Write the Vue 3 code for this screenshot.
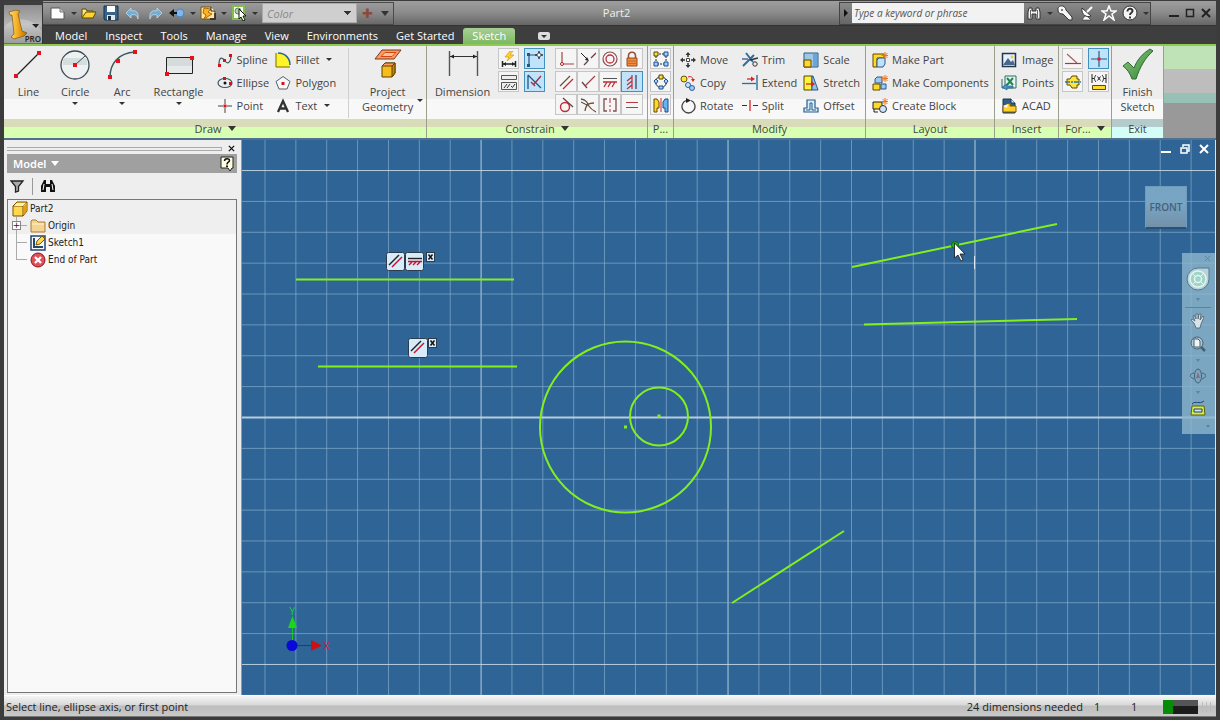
<script setup>
const quick = [
  { icon: 'new', label: 'New', caret: true },
  { icon: 'open', label: 'Open' },
  { icon: 'save', label: 'Save' },
  { icon: 'undo', label: 'Undo' },
  { icon: 'redo', label: 'Redo' },
  { icon: 'return', label: 'Return', caret: true },
  { icon: 'update', label: 'Update', caret: true },
  { icon: 'select', label: 'Select', caret: true }
]
const help = [
  { icon: 'binoc', label: 'Search', caret: true },
  { icon: 'key', label: 'Subscription' },
  { icon: 'dish', label: 'Communication center' },
  { icon: 'star', label: 'Favorites' },
  { icon: 'help', label: 'Help', caret: true }
]
const tabs = ['Model', 'Inspect', 'Tools', 'Manage', 'View', 'Environments', 'Get Started', 'Sketch']
const shapes = [
  { icon: 'line', label: 'Line' },
  { icon: 'circle', label: 'Circle', caret: true },
  { icon: 'arc', label: 'Arc', caret: true },
  { icon: 'rect', label: 'Rectangle', caret: true }
]
const curves = [
  { icon: 'spline', label: 'Spline' },
  { icon: 'ellipse', label: 'Ellipse' },
  { icon: 'point', label: 'Point' }
]
const details = [
  { icon: 'fillet', label: 'Fillet', caret: true },
  { icon: 'polygon', label: 'Polygon' },
  { icon: 'text', label: 'Text', caret: true }
]
const dims = [
  { icon: 'autodim', label: 'Automatic dimensions' },
  { icon: 'infer', label: 'Constraint inference', on: true },
  { icon: 'showcon', label: 'Show constraints' },
  { icon: 'persist', label: 'Constraint persistence', on: true }
]
const cons = [
  { icon: 'coincident', label: 'Coincident' },
  { icon: 'collinear', label: 'Collinear' },
  { icon: 'concentric', label: 'Concentric' },
  { icon: 'lock', label: 'Fix' },
  { icon: 'parallel', label: 'Parallel' },
  { icon: 'perp', label: 'Perpendicular' },
  { icon: 'horiz', label: 'Horizontal' },
  { icon: 'vert', label: 'Vertical', on: true },
  { icon: 'tangent', label: 'Tangent' },
  { icon: 'smooth', label: 'Smooth' },
  { icon: 'symm', label: 'Symmetric' },
  { icon: 'equal', label: 'Equal' }
]
const patterns = [
  { icon: 'rectpat', label: 'Rectangular pattern' },
  { icon: 'circpat', label: 'Circular pattern' },
  { icon: 'mirror', label: 'Mirror' }
]
const modify = [
  [{ icon: 'move', label: 'Move' }, { icon: 'copy', label: 'Copy' }, { icon: 'rotate', label: 'Rotate' }],
  [{ icon: 'trim', label: 'Trim' }, { icon: 'extend', label: 'Extend' }, { icon: 'split', label: 'Split' }],
  [{ icon: 'scale', label: 'Scale' }, { icon: 'stretch', label: 'Stretch' }, { icon: 'offset', label: 'Offset' }]
]
const layout = [
  { icon: 'mkpart', label: 'Make Part' },
  { icon: 'mkcomp', label: 'Make Components' },
  { icon: 'mkblock', label: 'Create Block' }
]
const insert = [
  { icon: 'image', label: 'Image' },
  { icon: 'points', label: 'Points' },
  { icon: 'acad', label: 'ACAD' }
]
const format = [
  { icon: 'constr', label: 'Construction' },
  { icon: 'center', label: 'Center point', on: true },
  { icon: 'cline', label: 'Centerline' },
  { icon: 'driven', label: 'Driven dimension' }
]
const STEP = 30.87
const range = (n) => Array.from({ length: n }, (_, i) => i)
const vLines = range(80).map((i) => ({ at: 733 + (i - 23) * STEP, major: (i - 23) % 8 === 0 }))
const hLines = range(60).map((i) => ({ at: 277.5 + (i - 8) * STEP, major: (i - 8) % 8 === 0, axis: i === 8 }))
</script>

<template>
  <svg class="defs" aria-hidden="true">
    <defs>
      <linearGradient id="gold" x1="0" x2="1"><stop offset="0" stop-color="#ffe27a" /><stop offset=".5" stop-color="#f2a91c" /><stop offset="1" stop-color="#b86c00" /></linearGradient>
      <linearGradient id="green" x1="0" y1="0" x2="1" y2="1"><stop offset="0" stop-color="#8fce7c" /><stop offset="1" stop-color="#2f7f37" /></linearGradient>
    </defs>
    <symbol id="new" viewBox="0 0 16 16"><path d="M1 3h9l4 4v7H1z" fill="#fff" stroke="#555" /><path d="M10 3v4h4" fill="#ccc" stroke="#777" /></symbol>
    <symbol id="open" viewBox="0 0 16 16"><path d="M1 13V4h4l1 2h6v2" fill="#ffe680" stroke="#5b4a00" /><path d="M1 13l4-6h10l-3 6z" fill="#ffd62e" stroke="#5b4a00" /></symbol>
    <symbol id="save" viewBox="0 0 16 16"><path d="M1 1h14v14H2l-1-1z" fill="#3a6487" stroke="#17304a" /><path d="M4 1h8v6H4z" fill="#fff" /><path d="M4 10h8v5H4z" fill="#dfe8ef" /><path d="M5 11h3v4H5z" fill="#1c2c3c" /></symbol>
    <symbol id="undo" viewBox="0 0 16 16"><path d="M6 3v3c5-1 8 1 7 8-1-4-3-5-7-4v3L1 8z" fill="#6faed8" stroke="#e0edf5" stroke-width=".6" /></symbol>
    <symbol id="redo" viewBox="0 0 16 16"><path d="M10 3v3C5 5 2 7 3 14c1-4 3-5 7-4v3l5-5z" fill="#6faed8" stroke="#e0edf5" stroke-width=".6" /></symbol>
    <symbol id="return" viewBox="0 0 16 16"><circle cx="11" cy="8" r="4" fill="#7db6f0" stroke="#4a83c4" /><path d="M5 4v8L0 8zM5 7h3v2H5z" fill="#111" /></symbol>
    <symbol id="update" viewBox="0 0 16 16"><path d="M1 2h10l4 4v8H1z" fill="#ffe6a8" stroke="#7a5200" /><path d="M4 3l7 1-3 3 4 2-8 5 2-4-3-2z" fill="#ffb01e" stroke="#965200" stroke-width=".8" /><path d="M11 2v4h4" fill="#fff" stroke="#222" /><path d="M15 8v6h-5" fill="none" stroke="#222" stroke-width="1.500" /></symbol>
    <symbol id="select" viewBox="0 0 16 16"><path d="M2 1h11v13H2z" fill="#f8fff0" stroke="#82bd50" stroke-width="2" /><circle cx="7" cy="6" r="3" fill="#b8cfaa" stroke="#668158" /><path d="M8 4v10l2-2 2 4 2-1-2-4h3z" fill="#fff" stroke="#111" /></symbol>
    <symbol id="binoc" viewBox="0 0 16 16"><path d="M2 14V7l1-4h3v3h4V3h3l1 4v7h-4V9H6v5z" fill="#f4f4f4" stroke="#333" /><path d="M4.500 5v8M11.500 5v8" stroke="#666" /></symbol>
    <symbol id="key" viewBox="0 0 16 16"><path d="M1 5c-1-5 7-6 8 0l6 7v3h-3L6 9C3 9 1 8 1 5z" fill="#f6f6f6" stroke="#333" /><circle cx="5" cy="5" r="1" fill="#555" /></symbol>
    <symbol id="dish" viewBox="0 0 16 16"><path d="M3 3l9 8c-4 2-10-1-9-8z" fill="#fff" stroke="#333" /><path d="M8 7l5-5" stroke="#fff" stroke-width="2" /><path d="M6 11l-3 4h9l-3-3z" fill="#fff" stroke="#333" stroke-width=".6" /></symbol>
    <symbol id="star" viewBox="0 0 16 16"><path d="M8 1l2 5h5l-4 3 2 6-5-4-5 4 2-6-4-3h5z" fill="#777" stroke="#fff" stroke-width="1.500" /></symbol>
    <symbol id="help" viewBox="0 0 16 16"><circle cx="8" cy="8" r="7" fill="#f5f5f5" stroke="#333" /><path d="M5.500 6.500c0-4 5-3 5-.5 0 2-2.500 1.500-2.500 4" fill="none" stroke="#333" stroke-width="2" /><path d="M7 11.500h2v2H7z" fill="#333" /></symbol>
    <symbol id="line" viewBox="0 0 32 32"><path d="M4 28L27 5" stroke="#222" stroke-width="1.300" /><path d="M2 26h4v4H2zM25 3h4v4h-4z" fill="#e8101c" /></symbol>
    <symbol id="circle" viewBox="0 0 32 32"><circle cx="16" cy="17" r="14" fill="#eef1f1" stroke="#3c4c55" stroke-width="1.300" /><path d="M4 10h24v7H4z" fill="#d5dedd" /><path d="M16 17L26 8" stroke="#345" /><path d="M14 15h4v4h-4z" fill="#e8101c" /></symbol>
    <symbol id="arc" viewBox="0 0 32 32"><path d="M4 29C4 16 12 5 29 4" fill="none" stroke="#3b5961" stroke-width="1.500" /><path d="M2 27h4v4H2zM10 11h4v4h-4zM27 2h4v4h-4z" fill="#e8101c" /></symbol>
    <symbol id="rect" viewBox="0 0 32 32"><path d="M3.500 9.500h26v16h-26z" fill="#e6eaea" stroke="#222" /><path d="M4 10h25v8H4z" fill="#d5dbda" /><path d="M2 24h4v4H2zM27 8h4v4h-4z" fill="#e8101c" /></symbol>
    <symbol id="spline" viewBox="0 0 16 16"><path d="M2 13C2 3 6 6 8 9c3 4 6 1 6-6" fill="none" stroke="#3b5961" stroke-width="1.200" /><path d="M1 12h3v3H1zM6 7h3v3H6zM12 2h3v3h-3z" fill="#d8101c" /></symbol>
    <symbol id="ellipse" viewBox="0 0 16 16"><ellipse cx="8" cy="8" rx="7" ry="4.500" fill="none" stroke="#3b5961" stroke-width="1.200" /><path d="M6 2h3v3H6zM12 7h3v3h-3z" fill="#d8101c" /><circle cx="8" cy="8" r="1.500" fill="#111" /></symbol>
    <symbol id="point" viewBox="0 0 16 16"><path d="M8 1v5M8 10v5M1 8h5M10 8h5" stroke="#444" /><path d="M6.500 6.500h3v3h-3z" fill="#d8101c" /></symbol>
    <symbol id="fillet" viewBox="0 0 16 16"><path d="M1 1h3c7 0 11 4 11 11v3H1z" fill="#fff42b" /><path d="M3 1c7 0 12 5 12 12" fill="none" stroke="#24679a" stroke-width="1.500" /><path d="M1 1v14h14" fill="none" stroke="#786c00" /></symbol>
    <symbol id="polygon" viewBox="0 0 16 16"><path d="M8 1.500l7 5L12 14H4L1 6.500z" fill="#f7f7f7" stroke="#50616a" /><path d="M6.500 7h3v3h-3z" fill="#d8101c" /></symbol>
    <symbol id="text" viewBox="0 0 16 16"><path d="M3 14L8 3l5 11M5 10.500h6" fill="none" stroke="#333" stroke-width="2.300" /></symbol>
    <symbol id="project" viewBox="0 0 32 32"><path d="M10 2h19l-7 9H3z" fill="#ff9a68" stroke="#793b16" /><path d="M13 4.500h11l-4 4H9z" fill="#ffc29a" stroke="#d7470c" /><path d="M10 18l3-3h10v10l-3 4H10z" fill="#f6bc19" stroke="#5a4200" /><path d="M10 18l3-3h10l-3 3z" fill="#ff9a68" stroke="#5a4200" /><path d="M20 18l3-3v10l-3 4z" fill="#c98300" stroke="#5a4200" /></symbol>
    <symbol id="dim" viewBox="0 0 32 32"><path d="M2.500 3v25M30.500 3v25" stroke="#555" stroke-width="1.400" /><path d="M3 8.500h27" stroke="#333" /><path d="M3 8.500l4-2v4zM30 8.500l-4-2v4z" fill="#222" /></symbol>
    <symbol id="autodim" viewBox="0 0 16 16"><path d="M9 0L4 6h4l-2 4 7-6H9l3-4z" fill="#ffd42a" stroke="#d58e00" stroke-width=".6" /><path d="M1.500 10v6M14.500 10v6M2 13h12" stroke="#222" stroke-width="1.500" /><path d="M2 13l3-2v4zM14 13l-3-2v4z" fill="#222" /></symbol>
    <symbol id="infer" viewBox="0 0 16 16"><path d="M2 14V4h8" fill="none" stroke="#235681" stroke-width="1.200" /><path d="M0 2h3v3H0zM0 13h3v3H0z" fill="#235681" /><path d="M12 0l1 3 3 1-3 1-1 3-1-3-3-1 3-1z" fill="#fff" stroke="#222" stroke-width=".8" /></symbol>
    <symbol id="showcon" viewBox="0 0 16 16"><path d="M.5 1.500h15v4H.5zM.5 8.500h15v7H.5z" fill="#eee" stroke="#555" /><path d="M3 14l3-4M6 14l3-4M10 12l1.500 1.500L14 10" stroke="#333" fill="none" /></symbol>
    <symbol id="persist" viewBox="0 0 16 16"><path d="M1 1v14M1 1l13 13" stroke="#235681" stroke-width="1.300" /><path d="M7 10L14 2M4 8l4 4" stroke="#9b3442" stroke-width="1.400" /></symbol>
    <symbol id="coincident" viewBox="0 0 16 16"><path d="M4 1v12h12" fill="none" stroke="#a5434a" stroke-width="1.200" /><circle cx="4" cy="13" r="1.500" fill="#fff" stroke="#a22" /></symbol>
    <symbol id="collinear" viewBox="0 0 16 16"><path d="M1 2l6 6" stroke="#222" /><path d="M5 9l4 1-2-4z" fill="#222" /><path d="M4 14l4-4M11 7l5-5" stroke="#6c3d43" stroke-width="1.300" /></symbol>
    <symbol id="concentric" viewBox="0 0 16 16"><circle cx="8" cy="8" r="7" fill="none" stroke="#8a4d54" stroke-width="1.200" /><circle cx="8" cy="8" r="4" fill="none" stroke="#c22e38" stroke-width="1.300" /></symbol>
    <symbol id="lock" viewBox="0 0 16 16"><path d="M4.500 8V5c0-5 7-5 7 0v3" fill="none" stroke="#9a5230" stroke-width="1.600" /><path d="M3 7h10v8H3z" fill="#f08b3c" stroke="#9a4a20" /><path d="M4 10h8M4 12.500h8" stroke="#c4682c" /></symbol>
    <symbol id="parallel" viewBox="0 0 16 16"><path d="M2 12L12 2" stroke="#69563d" stroke-width="1.300" /><path d="M5 15L15 5" stroke="#c12b36" stroke-width="1.300" /></symbol>
    <symbol id="perp" viewBox="0 0 16 16"><path d="M2 8l5 6" stroke="#6c3d43" stroke-width="1.300" /><path d="M5 12L15 2" stroke="#a5434a" stroke-width="1.300" /></symbol>
    <symbol id="horiz" viewBox="0 0 16 16"><path d="M1 4.500h14" stroke="#555" /><path d="M1 8h14M5 8l-3 5M9 8l-3 5M13 8l-3 5" stroke="#c12b36" stroke-width="1.300" /></symbol>
    <symbol id="vert" viewBox="0 0 16 16"><path d="M12 1v14" stroke="#445" stroke-width="1.300" /><path d="M8 1v14M8 3L3 7M8 7l-5 4M8 11l-5 4" stroke="#c12b36" stroke-width="1.200" /></symbol>
    <symbol id="tangent" viewBox="0 0 16 16"><circle cx="7" cy="10" r="4.500" fill="none" stroke="#c12b36" stroke-width="1.400" /><path d="M5 1l10 9" stroke="#603b40" stroke-width="1.200" /></symbol>
    <symbol id="smooth" viewBox="0 0 16 16"><path d="M1 2c5 1 7 4 7 6 2 3 4 5 8 7M5 14c1-7 4-8 9-8" fill="none" stroke="#6b4e3a" stroke-width="1.300" /><path d="M1 5l6 3" stroke="#333" /></symbol>
    <symbol id="symm" viewBox="0 0 16 16"><path d="M5 2H2v12h3M11 2h3v12h-3" fill="none" stroke="#7d4f4f" stroke-width="1.300" /><path d="M8 1v5M8 8v2M8 12v3" stroke="#c12b36" /></symbol>
    <symbol id="equal" viewBox="0 0 16 16"><path d="M2 5.500h12M2 10.500h12" stroke="#b83941" stroke-width="1.200" /></symbol>
    <symbol id="rectpat" viewBox="0 0 16 16"><path d="M3 3h10v10H3z" fill="none" stroke="#222" stroke-dasharray="2 1" /><path d="M11 1h4v4h-4zM1 11h4v4H1zM11 11h4v4h-4z" fill="#9fd0ff" stroke="#1d4d8d" /><path d="M1 1h4v4H1z" fill="#ffe33b" stroke="#554400" /></symbol>
    <symbol id="circpat" viewBox="0 0 16 16"><circle cx="8" cy="8" r="5.500" fill="none" stroke="#334" /><path d="M6 12h4v3H6zM1 7l2-2 2 2-2 3zM11 7l2-2 2 2-2 3z" fill="#9fd0ff" stroke="#1d4d8d" /><path d="M6 1h4v4H6z" fill="#ffe33b" stroke="#554400" /></symbol>
    <symbol id="mirror" viewBox="0 0 16 16"><path d="M1 2h3l2 3v6H4v4H1z" fill="#ffd928" stroke="#604900" /><path d="M15 2h-3l-2 3v6h2v4h3z" fill="#66b4f0" stroke="#1d4d8d" /><path d="M8 1v14" stroke="#d22" /></symbol>
    <symbol id="move" viewBox="0 0 16 16"><path d="M8 0l2.500 3h-5zM8 16l2.500-3h-5zM0 8l3-2.500v5zM16 8l-3-2.500v5z" fill="#333" /><path d="M8 3v2M8 11v2M3 8h2M11 8h2" stroke="#333" stroke-width="1.500" /><path d="M6.500 6.500h3v3h-3z" fill="#fff" stroke="#444" /></symbol>
    <symbol id="copy" viewBox="0 0 16 16"><circle cx="4" cy="4" r="3" fill="#ffe33b" stroke="#665500" /><path d="M8 2c3-1 5 0 5 3" fill="none" stroke="#d22" /><path d="M11 4h4l-2 3z" fill="#d22" /><circle cx="8" cy="10" r="2.500" fill="#cfe4fa" stroke="#2b62a4" /><circle cx="12" cy="13" r="2.500" fill="#9fc8f0" stroke="#2b62a4" /></symbol>
    <symbol id="rotate" viewBox="0 0 16 16"><path d="M11 2.500a6.500 6.500 0 1 1-5 0" fill="none" stroke="#444" stroke-width="1.300" /><path d="M6 0l5 2.500L6 5z" fill="#222" /></symbol>
    <symbol id="trim" viewBox="0 0 16 16"><path d="M0 7h6" stroke="#347" stroke-width="1.200" /><path d="M4 1l7 9M1 14L12 3" stroke="#2b6f9f" stroke-width="2" /><circle cx="13" cy="12" r="2.200" fill="none" stroke="#333" /><path d="M8 8l8-2" stroke="#333" stroke-width="1.300" /></symbol>
    <symbol id="extend" viewBox="0 0 16 16"><path d="M0 8.500h14" stroke="#2b6f9f" stroke-width="1.300" /><path d="M5 4h6" stroke="#d22" stroke-width="1.300" /><path d="M9 1.500l4 2.500-4 2.500z" fill="#d22" /><path d="M15 0v15" stroke="#2b6f9f" stroke-width="1.400" /></symbol>
    <symbol id="split" viewBox="0 0 16 16"><path d="M0 7.500h5M11 7.500h5" stroke="#333" stroke-width="1.200" /><path d="M8 2v11" stroke="#d22" stroke-width="1.300" /></symbol>
    <symbol id="scale" viewBox="0 0 16 16"><path d="M1 1h14v14H1z" fill="#9fc8e8" stroke="#285b87" /><path d="M10 2h4v12h-4z" fill="#6aa7d5" /><path d="M1 8h7v7H1z" fill="#ffd928" stroke="#604900" /></symbol>
    <symbol id="stretch" viewBox="0 0 16 16"><path d="M1 1h8v14H1z" fill="#fff23b" stroke="#554400" /><path d="M10 1l5 14h-6V1z" fill="#8fc2ec" stroke="#285b87" /><path d="M3 9h7" stroke="#d22" stroke-width="1.300" /><path d="M8 6l4 3-4 3z" fill="#d22" /></symbol>
    <symbol id="offset" viewBox="0 0 16 16"><path d="M1 14V10h3V2h8v8h3v4z" fill="#d9eefa" stroke="#285b87" stroke-width="1.200" /><path d="M3 12h4V5h2v7h4" fill="none" stroke="#285b87" /></symbol>
    <symbol id="mkpart" viewBox="0 0 16 16"><path d="M1 2h11v4H5v9H1z" fill="#ffd928" stroke="#604900" /><path d="M5 8l2-2h6v6l-2 3H5z" fill="#bfe0fa" stroke="#285b87" /><path d="M13 0v7M9.500 3.500h7M10.500 1l5 5M15.500 1l-5 5" stroke="#ee7220" /></symbol>
    <symbol id="mkcomp" viewBox="0 0 16 16"><path d="M3 4l2-2h5v6H3zM9 9h5v5H9z" fill="#9fc8f0" stroke="#285b87" /><path d="M1 9h7v6H1z" fill="#ffd928" stroke="#604900" /><path d="M13 0v7M9.500 3.500h7M10.500 1l5 5M15.500 1l-5 5" stroke="#ee7220" /></symbol>
    <symbol id="mkblock" viewBox="0 0 16 16"><path d="M1 4h9v7H1z" fill="#ffd928" stroke="#222" /><path d="M2 11v3h4" fill="none" stroke="#222" /><circle cx="11" cy="11" r="3.500" fill="#cfe4fa" stroke="#333" /><path d="M13 0v7M9.500 3.500h7M10.500 1l5 5M15.500 1l-5 5" stroke="#ee7220" /></symbol>
    <symbol id="image" viewBox="0 0 16 16"><path d="M1.500 1.500h13v13h-13z" fill="#e4efff" stroke="#23364c" stroke-width="1.500" /><path d="M2 13l5-7 3 4 2-2 2 5z" fill="#476889" /><circle cx="11" cy="5" r="1.500" fill="#f7c54b" /></symbol>
    <symbol id="points" viewBox="0 0 16 16"><path d="M4 1h11v12H4z" fill="#e7f4ef" stroke="#27705a" /><path d="M6 3l6 7M12 3l-6 7" stroke="#278257" stroke-width="2" /><path d="M1 4v9h3" fill="none" stroke="#27705a" /><path d="M1 12l5-3v2h6v2H6v2z" fill="#4c94c8" stroke="#1d5683" stroke-width=".6" /></symbol>
    <symbol id="acad" viewBox="0 0 16 16"><path d="M2 1h8l4 4v10H2z" fill="#325d8b" stroke="#1a3450" /><path d="M10 1v4h4" fill="#dce9f5" stroke="#1a3450" /><path d="M2 8l7-3v3h6v6H2z" fill="#ffcf2b" stroke="#805b00" /><path d="M2 8l5-2-1 4z" fill="#fff" /></symbol>
    <symbol id="constr" viewBox="0 0 16 16"><path d="M2 3l10 9" stroke="#a86060" stroke-width="1.200" /><path d="M0 12.500h16" stroke="#c12b36" stroke-width="1.200" /></symbol>
    <symbol id="center" viewBox="0 0 16 16"><path d="M8 0v16M0 8h16" stroke="#285b87" stroke-width="1.200" /><path d="M6.500 6.500h3v3h-3z" fill="#e21835" /></symbol>
    <symbol id="cline" viewBox="0 0 16 16"><path d="M2 5h3l2-3h5v3h2v6h-2v3H7l-2-3H2z" fill="#ffe23b" stroke="#604900" /><path d="M0 8h16" stroke="#2678aa" stroke-width="1.300" stroke-dasharray="5 1 2 1" /></symbol>
    <symbol id="driven" viewBox="0 0 16 16"><path d="M1 0v9M15 0v9M5 1c-2 2-2 5 0 7M11 1c2 2 2 5 0 7M6.500 2.500l3 4M9.500 2.500l-3 4M1 4.500h2M13 4.500h2" fill="none" stroke="#222" /><path d="M1.500 11.500h13v4h-13z" fill="#ffd928" stroke="#604900" /></symbol>
    <symbol id="check" viewBox="0 0 32 32"><path d="M1 18l5-4 6 6C15 12 20 6 28 1l3 2C23 10 18 19 14 31h-4C8 25 5 21 1 18z" fill="url(#green)" stroke="#2d6b32" /></symbol>
    <symbol id="filter" viewBox="0 0 16 16"><path d="M2 3h12L9.500 8.500V13l-3 1V8.500z" fill="#aaa" stroke="#222" stroke-width="1.300" /></symbol>
    <symbol id="find" viewBox="0 0 16 16"><path d="M1 14V8l3-6h2v4h4V2h2l3 6v6h-5V9H6v5z" fill="#111" /><path d="M4 6l-1 6M12 6l1 6" stroke="#fff" /></symbol>
    <symbol id="cube" viewBox="0 0 16 16"><path d="M1 5l4-4h10v9l-4 5H1z" fill="#ffd84d" stroke="#7a5200" /><path d="M1 5h10v10M11 5l4-4" fill="none" stroke="#7a5200" /><path d="M5 2h9l-3 3H2z" fill="#fff0a8" /><path d="M11.500 5.500l3-3V10l-3 4z" fill="#e59f17" /></symbol>
    <symbol id="folder" viewBox="0 0 16 16"><path d="M1 14V3l1-1h4l2 2h7v10z" fill="#f4d492" stroke="#a97b32" /><path d="M2 6h12" stroke="#fff2cc" /></symbol>
    <symbol id="sketch" viewBox="0 0 16 16"><path d="M1 1h14v14H1z" fill="#f4f8ff" stroke="#24466d" stroke-width="1.500" /><path d="M4 3v9h9" fill="none" stroke="#24466d" stroke-width="2" /><path d="M6 10l1-4 5-5 3 3-5 5z" fill="#ffd84d" stroke="#775400" /></symbol>
    <symbol id="end" viewBox="0 0 16 16"><circle cx="8" cy="8" r="7" fill="#e0505a" stroke="#8a1520" /><path d="M5 5l6 6M11 5l-6 6" stroke="#fff" stroke-width="2.300" /></symbol>
    <symbol id="wheel" viewBox="0 0 24 24"><path d="M12 1h11v11A11 11 0 1 1 12 1z" fill="#b8d2dd" stroke="#52788c" /><circle cx="12" cy="12" r="8" fill="#9fd4c9" stroke="#e4f4ef" stroke-width="1.500" /><circle cx="12" cy="12" r="3.500" fill="none" stroke="#e4f4ef" stroke-width="1.500" /><path d="M6 6l3 3M18 6l-3 3M6 18l3-3M18 18l-3-3" stroke="#e4f4ef" /></symbol>
    <symbol id="hand" viewBox="0 0 16 16"><path d="M4 10L1 7l1-1 3 2-2-5 1-1 2 4V1h2v5l1-5h2l-1 6 3-4 1 1-3 7-1 4H6z" fill="#d8e3e8" stroke="#4b6270" stroke-width=".8" /></symbol>
    <symbol id="zoomic" viewBox="0 0 16 16"><circle cx="7" cy="7" r="6" fill="#aec8d5" stroke="#46616f" /><path d="M4 3h4l2 2v6H4z" fill="#eef4f7" stroke="#46616f" /><path d="M11 11l4 4" stroke="#46616f" stroke-width="2.500" /></symbol>
    <symbol id="orbit" viewBox="0 0 16 16"><ellipse cx="8" cy="8" rx="3.500" ry="7" fill="none" stroke="#46616f" /><path d="M4 5C-1 6-1 9 4 11M12 5c5 1 5 4 0 6" fill="none" stroke="#46616f" /><path d="M8 4l2 6H6z" fill="#8a6f78" /></symbol>
    <symbol id="look" viewBox="0 0 16 16"><path d="M2 4c4-4 7 1 12-3" fill="none" stroke="#203f6f" /><path d="M2 6h12l1 9H1z" fill="#d9e84b" stroke="#58650b" /><path d="M4 9h8v3H4z" fill="#cfe2ff" stroke="#203f6f" /></symbol>
  </svg>

  <div class="window">
    <header class="top">
      <button class="logo" aria-label="Application menu">
        <svg viewBox="0 0 38 36" aria-hidden="true">
          <path d="M0 20C8 10 26 8 38 24v12H0z" fill="#dadada" opacity=".45" />
          <path d="M5 5l7-2 4 1-2 3 4 17 5 2-3 3-10 3-3-2 3-3L8 8 6 8z" fill="url(#gold)" stroke="#7d5412" stroke-width=".7" />
          <path d="M28 17h7l-3 4z" fill="#222" />
        </svg>
        <span>PRO</span>
      </button>
      <div class="bars">
        <div class="titlebar">
          <div class="quick">
            <button v-for="q in quick" :key="q.icon" class="tool" :class="{ wide: q.caret }" :aria-label="q.label">
              <svg class="ic"><use :href="'#' + q.icon" /></svg><i v-if="q.caret" class="caret" />
            </button>
            <select class="color" aria-label="Color"><option>Color</option></select>
            <button class="tool plus" aria-label="Add">✚</button>
            <button class="tool more" aria-label="Customize"><i class="caret large" /></button>
          </div>
          <h1>Part2</h1>
          <div class="search">
            <button class="fold" aria-label="Collapse search"><i /></button>
            <input type="text" placeholder="Type a keyword or phrase" aria-label="Search help">
            <button v-for="h in help" :key="h.icon" class="tool" :class="{ wide: h.caret }" :aria-label="h.label">
              <svg class="ic"><use :href="'#' + h.icon" /></svg><i v-if="h.caret" class="caret" />
            </button>
          </div>
          <div class="winbtns">
            <button aria-label="Minimize"><svg viewBox="0 0 10 10"><path d="M0 8h10" stroke="#222" stroke-width="2" /></svg></button>
            <button aria-label="Maximize"><svg viewBox="0 0 10 10"><path d="M1.500 1.500h7v7h-7z" fill="none" stroke="#222" stroke-width="1.500" /></svg></button>
            <button aria-label="Close"><svg viewBox="0 0 10 10"><path d="M1 1l8 8M9 1L1 9" stroke="#222" stroke-width="2" /></svg></button>
          </div>
        </div>
        <nav class="tabs">
          <button v-for="t in tabs" :key="t" :class="{ active: t === 'Sketch' }">{{ t }}</button>
          <button class="mini" aria-label="Ribbon display"><span><i class="caret" /></span></button>
        </nav>
      </div>
    </header>

    <div class="ribbon">
      <section class="panel draw">
        <div class="body">
          <button v-for="s in shapes" :key="s.icon" class="big" :class="s.icon">
            <svg class="ic32"><use :href="'#' + s.icon" /></svg><span>{{ s.label }}</span><i v-if="s.caret" class="caret" />
          </button>
          <div class="col curves">
            <button v-for="c in curves" :key="c.icon" class="row"><svg class="ic"><use :href="'#' + c.icon" /></svg>{{ c.label }}</button>
          </div>
          <div class="col details">
            <button v-for="c in details" :key="c.icon" class="row"><svg class="ic"><use :href="'#' + c.icon" /></svg>{{ c.label }}<i v-if="c.caret" class="caret" /></button>
          </div>
          <button class="big project"><svg class="ic32"><use href="#project" /></svg><span>Project<br>Geometry</span><i class="caret" /></button>
        </div>
        <footer>Draw<i class="caret large" /></footer>
      </section>
      <section class="panel constrain">
        <div class="body">
          <button class="big dimension"><svg class="ic32"><use href="#dim" /></svg><span>Dimension</span></button>
          <div class="pair">
            <button v-for="c in dims" :key="c.icon" class="cell" :class="{ on: c.on }" :aria-label="c.label"><svg class="ic"><use :href="'#' + c.icon" /></svg></button>
          </div>
          <div class="quad">
            <button v-for="c in cons" :key="c.icon" class="cell" :class="{ on: c.on }" :aria-label="c.label"><svg class="ic"><use :href="'#' + c.icon" /></svg></button>
          </div>
        </div>
        <footer>Constrain<i class="caret large" /></footer>
      </section>
      <section class="panel pattern">
        <div class="body">
          <div class="single">
            <button v-for="c in patterns" :key="c.icon" class="cell" :aria-label="c.label"><svg class="ic"><use :href="'#' + c.icon" /></svg></button>
          </div>
        </div>
        <footer>P...</footer>
      </section>
      <section class="panel modify">
        <div class="body">
          <div v-for="(col, n) in modify" :key="n" class="col">
            <button v-for="c in col" :key="c.icon" class="row"><svg class="ic"><use :href="'#' + c.icon" /></svg>{{ c.label }}</button>
          </div>
        </div>
        <footer>Modify</footer>
      </section>
      <section class="panel layout">
        <div class="body">
          <div class="col">
            <button v-for="c in layout" :key="c.icon" class="row"><svg class="ic"><use :href="'#' + c.icon" /></svg>{{ c.label }}</button>
          </div>
        </div>
        <footer>Layout</footer>
      </section>
      <section class="panel insert">
        <div class="body">
          <div class="col">
            <button v-for="c in insert" :key="c.icon" class="row"><svg class="ic"><use :href="'#' + c.icon" /></svg>{{ c.label }}</button>
          </div>
        </div>
        <footer>Insert</footer>
      </section>
      <section class="panel format">
        <div class="body">
          <div class="pair">
            <button v-for="c in format" :key="c.icon" class="cell" :class="{ on: c.on }" :aria-label="c.label"><svg class="ic"><use :href="'#' + c.icon" /></svg></button>
          </div>
        </div>
        <footer>For...<i class="caret large" /></footer>
      </section>
      <section class="panel exit">
        <div class="body">
          <button class="big"><svg class="ic32"><use href="#check" /></svg><span>Finish<br>Sketch</span></button>
        </div>
        <footer>Exit</footer>
      </section>
      <div class="rest" />
    </div>

    <main class="work">
      <aside class="browser">
        <div class="grip"><span /><button aria-label="Close browser"><svg viewBox="0 0 8 8"><path d="M1 1l6 6M7 1L1 7" stroke="#111" stroke-width="1.500" /></svg></button></div>
        <div class="head">
          <button class="model">Model<i class="caret large" /></button>
          <button class="hint" aria-label="Browser help"><svg viewBox="0 0 14 16"><path d="M1 1h12v11h-1l-2 3-2-3H1z" fill="#fffde0" stroke="#222" /><path d="M4.500 5c0-3 5-3 5-.5C9.500 6.500 7 6 7 8.500" fill="none" stroke="#111" stroke-width="1.500" /><path d="M6 9.500h2v1.500H6z" fill="#111" /></svg></button>
        </div>
        <div class="btools">
          <button aria-label="Filter"><svg class="ic"><use href="#filter" /></svg></button>
          <span />
          <button aria-label="Find"><svg class="ic"><use href="#find" /></svg></button>
        </div>
        <ul class="tree">
          <li class="root"><svg class="ic"><use href="#cube" /></svg>Part2</li>
          <li class="kid"><button class="expand" aria-label="Expand Origin">+</button><svg class="ic"><use href="#folder" /></svg>Origin</li>
          <li class="kid"><svg class="ic"><use href="#sketch" /></svg>Sketch1</li>
          <li class="kid last"><svg class="ic"><use href="#end" /></svg>End of Part</li>
        </ul>
      </aside>

      <div class="canvas">
        <svg class="drawing" role="img" aria-label="Sketch">
          <g class="grid">
            <line v-for="(l, n) in vLines" :key="'v' + n" :x1="l.at" :x2="l.at" y1="0" y2="100%" :class="{ major: l.major }" />
            <line v-for="(l, n) in hLines" :key="'h' + n" :y1="l.at" :y2="l.at" x1="0" x2="100%" :class="{ major: l.major, axis: l.axis }" />
          </g>
          <g class="ink">
            <path d="M54 139.500h218M76 226.500h199" />
            <path d="M610 127L815 84M622 184.500L835 179M490 463L602 391" />
            <circle cx="383.500" cy="287" r="85.500" />
            <circle cx="417" cy="276.500" r="29" />
            <path d="M382 287h3M415.500 276h3" stroke-width="3" />
          </g>
          <g transform="translate(144 112)">
            <rect class="glyph" x=".5" y=".5" width="18" height="18" rx="2" /><rect class="glyph" x="19.500" y=".5" width="18" height="18" rx="2" />
            <path d="M3 13L13 3" stroke="#222" stroke-width="1.400" /><path d="M6 15L16 5" stroke="#c8102c" stroke-width="1.400" />
            <path d="M22 6.500h14" stroke="#222" stroke-width="1.400" /><path d="M22 9.500h14M26 10l-3 3M30 10l-3 3M34 10l-3 3" stroke="#c8102c" stroke-width="1.400" />
            <rect class="glyph" x="40.500" y=".5" width="8" height="9" /><path d="M42.500 2.500l4 5M46.500 2.500l-4 5" stroke="#111" stroke-width="1.500" />
          </g>
          <g transform="translate(166 198)">
            <rect class="glyph" x=".5" y=".5" width="19" height="19" rx="2" />
            <path d="M3 13L13 3" stroke="#222" stroke-width="1.400" /><path d="M6 15L16 5" stroke="#c8102c" stroke-width="1.400" />
            <rect class="glyph" x="20.500" y=".5" width="8" height="9" /><path d="M22.500 2.500l4 5M26.500 2.500l-4 5" stroke="#111" stroke-width="1.500" />
          </g>
          <circle cx="713" cy="105" r="3.500" fill="#21b321" stroke="#0a6a0a" />
          <path d="M712.500 103v15l3.500-3 3 6 2-1-3-6h5z" fill="#fff" stroke="#111" stroke-width=".8" />
          <path d="M732.500 116v13" stroke="#dce7f0" />
          <g>
            <path d="M50.500 505v-18" stroke="#18c818" /><path d="M46 488l4.500-12 4.500 12z" fill="#18d818" />
            <path d="M51 505.500h18" stroke="#9c1010" /><path d="M69 500l11 5.500-11 5.500z" fill="#d01010" />
            <circle cx="50" cy="505.500" r="5.500" fill="#0808d8" />
            <text x="47" y="475" fill="#18c848">Y</text><text x="81" y="510" fill="#d01840">X</text>
          </g>
        </svg>
        <div class="mdi">
          <button aria-label="Minimize document"><svg viewBox="0 0 10 10"><path d="M0 8h10" stroke="#fff" stroke-width="2" /></svg></button>
          <button aria-label="Restore document"><svg viewBox="0 0 10 10"><path d="M3 3V1h6v6H7M1 4h6v5H1z" fill="none" stroke="#fff" stroke-width="1.500" /></svg></button>
          <button aria-label="Close document"><svg viewBox="0 0 10 10"><path d="M1 1l8 8M9 1L1 9" stroke="#fff" stroke-width="2" /></svg></button>
        </div>
        <button class="viewcube">FRONT</button>
        <div class="navbar">
          <button class="shut" aria-label="Close navigation bar"><svg viewBox="0 0 8 8"><path d="M1 1l6 6M7 1L1 7" stroke="#5c8398" /></svg></button>
          <button class="wheel" aria-label="Steering wheel"><svg><use href="#wheel" /></svg></button>
          <i class="caret" />
          <hr>
          <button aria-label="Pan"><svg class="ic"><use href="#hand" /></svg></button>
          <button aria-label="Zoom"><svg class="ic"><use href="#zoomic" /></svg></button>
          <i class="caret" />
          <button aria-label="Orbit"><svg class="ic"><use href="#orbit" /></svg></button>
          <i class="caret" />
          <button aria-label="Look at"><svg class="ic"><use href="#look" /></svg></button>
          <i class="caret end" />
        </div>
      </div>
    </main>

    <footer class="status">
      <span class="msg">Select line, ellipse axis, or first point</span>
      <span class="need">24 dimensions needed</span>
      <span class="num">1</span>
      <span class="num">1</span>
      <span class="meter"><b /></span>
      <span class="size" />
    </footer>
  </div>
</template>

<style>
html, body, #app { height: 100%; }
body { margin: 0; overflow: hidden; }
</style>

<style scoped>
* { box-sizing: border-box; }
.defs { position: absolute; width: 0; height: 0; }
.window { display: flex; flex-direction: column; height: 100%; padding: 1px 4px 3px; background: #3c3c3c; font: 11px/16px "Open Sans", "Noto Sans", sans-serif; color: #444; }
button { display: flex; align-items: center; padding: 0; border: 0; background: none; font: inherit; color: inherit; white-space: nowrap; }
svg { display: block; flex: none; }
.ic { width: 16px; height: 16px; }
.ic32 { width: 32px; height: 32px; }
.caret { flex: none; width: 0; height: 0; border: 3px solid transparent; border-top-color: #333; border-bottom: 0; }
.caret.large { border-width: 4px; border-top-width: 5px; border-bottom: 0; }

.top { display: flex; height: 43px; background: #3e3e3e; }
.logo { position: relative; width: 39px; margin-top: 4px; background: linear-gradient(#909090, #b5b5b5 50%, #686868); border-right: 1px solid #333; }
.logo svg { width: 38px; height: 36px; }
.logo span { position: absolute; right: 1px; bottom: 0; font-size: 8px; line-height: 10px; font-weight: 600; color: #222; }
.bars { flex: 1; display: flex; flex-direction: column; min-width: 0; }
.titlebar { display: flex; align-items: center; height: 25px; background: linear-gradient(#9e9e9e, #8a8a8a 50%, #666); border-bottom: 1px solid #333; }
.quick { display: flex; align-items: center; height: 23px; padding-left: 7px; border: 1px solid #4a4a4a; border-left: 0; }
.quick .tool { width: 22px; }
.quick .tool.wide { width: 31px; gap: 5px; }
.color { width: 95px; height: 20px; padding: 0 4px; appearance: none; border: 1px solid #aaa; border-radius: 0; font: italic 11px "Open Sans", sans-serif; color: #888; background-image: linear-gradient(45deg, transparent 50%, #333 50%), linear-gradient(-45deg, transparent 50%, #333 50%); background-size: 4px 4px; background-position: right 8px center, right 4px center; background-repeat: no-repeat; background-color: #cfcfcf; }
.quick .plus { justify-content: center; width: 20px; color: #8a4a3c; font-size: 13px; }
.quick .more { width: 16px; justify-content: center; }
h1 { flex: 1; margin: 0; text-align: center; font: 11px/16px "Open Sans", sans-serif; color: #eee; }
.search { display: flex; align-items: center; height: 23px; margin-right: 18px; border: 1px solid #444; background: linear-gradient(#8a8a8a, #666); }
.fold { justify-content: center; width: 12px; height: 20px; }
.fold i { border: 4px solid transparent; border-left-color: #111; border-right: 0; }
.search input { width: 172px; height: 20px; padding: 0 2px; border: 0; border-radius: 0; background: #f2f2f2; font: italic 10px "Open Sans", sans-serif; color: #555; }
.search input::placeholder { color: #555; opacity: 1; }
.search .tool { width: 22px; justify-content: center; }
.search .tool.wide { width: 30px; gap: 5px; }
.winbtns { display: flex; gap: 6px; margin-right: 5px; }
.winbtns svg { width: 10px; height: 10px; }
.tabs { flex: 1; display: flex; align-items: stretch; padding: 2px 0 0 3px; }
.tabs button { padding: 0 9px; color: #fff; }
.tabs .active { background: linear-gradient(#a7cf95, #7eb862); border-radius: 3px 3px 0 0; }
.tabs .mini { padding-left: 23px; }
.mini span { display: grid; place-items: center; width: 12px; height: 8px; border-radius: 2px; background: #ddd; }

.ribbon { display: flex; height: 96px; border-top: 2px solid #8fcb50; border-bottom: 2px solid #52718f; background: #999; }
.panel { display: flex; flex-direction: column; flex: none; border-right: 1px solid #9aa08c; }
.body { display: flex; align-items: flex-start; flex: 1; padding-top: 2px; background: linear-gradient(#ededed 53px, #f8f8f8 53px); }
.panel footer { display: flex; justify-content: center; align-items: center; gap: 6px; height: 19px; background: linear-gradient(#d9dcb9 8px, #d9ffb3 8px); }
.draw { width: 423px; }
.draw .body { padding-left: 1px; }
.constrain { width: 221px; }
.pattern { width: 26px; }
.modify { width: 192px; }
.layout { width: 129px; }
.insert { width: 64px; }
.format { width: 53px; }
.exit { width: 52px; }
.exit footer { background: linear-gradient(#b3cccb 8px, #d4fdf8 8px); }
.rest { flex: 1; background: linear-gradient(#bfe3b7 23px, #bdbdbd 23px 47px, #98c1b5 47px 57px, #999 57px); }
.big { flex-direction: column; text-align: center; }
.big .ic32 { margin-bottom: 4px; }
.big .caret { margin-top: 2px; }
.line, .circle, .arc { width: 47px; }
.rect { width: 66px; }
.col { display: flex; flex-direction: column; }
.row { height: 23px; gap: 4px; }
.curves { width: 59px; margin-left: 5px; }
.row .caret { margin-left: 3px; }
.details { width: 73px; }
.details .row { gap: 4px; }
.project { position: relative; width: 78px; height: 70px; border-left: 1px solid #d0d0d0; }
.project .caret { position: absolute; right: 3px; bottom: 16px; }
.project span, .exit span { line-height: 15px; }
.dimension { width: 71px; }
.pair, .quad, .single { display: grid; gap: 2px; }
.pair { grid-template-columns: 21px 21px; column-gap: 5px; }
.quad { grid-template-columns: repeat(4, 22px); column-gap: 0; margin-left: 10px; }
.single { margin-left: 2px; }
.cell { justify-content: center; height: 21px; width: 100%; border: 1px solid #c6c6c6; background: #f5f5f5; }
.single .cell { width: 21px; }
.cell.on, .quad .cell.on { background: #bfe3fa; border-color: #4290c0; }
.modify .body { padding-left: 6px; }
.modify .col { width: 62px; }
.layout .body, .insert .body { padding-left: 6px; }
.insert .row { gap: 5px; }
.format .body { padding-left: 3px; }
.exit .big { width: 100%; }

.work { flex: 1; display: flex; min-height: 0; background: #eee; border-right: 1px solid #e0e0e0; }
.browser { display: flex; flex-direction: column; width: 238px; padding: 3px 4px 2px 3px; border-right: 1px solid #999; font: 10px/16px "DejaVu Sans Condensed", "Noto Sans", sans-serif; color: #222; }
.grip { display: flex; align-items: center; height: 11px; gap: 4px; }
.grip span { flex: 1; height: 4px; border: 1px solid #aaa; border-left: 0; }
.grip button { justify-content: center; width: 11px; }
.grip svg { width: 7px; height: 7px; }
.head { display: flex; justify-content: space-between; align-items: center; height: 19px; padding: 0 3px 0 6px; background: #a0a0a0; }
.model { gap: 5px; font: 600 11px/16px "Noto Sans", sans-serif; color: #fff; }
.model .caret { border-top-color: #fff; }
.hint svg { width: 14px; height: 16px; }
.btools { display: flex; align-items: center; gap: 6px; height: 26px; padding-left: 2px; }
.btools span { width: 1px; height: 17px; margin: 0 1px; background: #999; }
.tree { flex: 1; margin: 0; padding: 0 0 0 4px; list-style: none; border: 1px solid #777; background: linear-gradient(#efefef 34px, #f9f9f9 34px); }
.tree li { position: relative; display: flex; align-items: center; gap: 2px; height: 17px; }
.tree .kid { padding-left: 18px; gap: 2px; }
.kid::before { content: ""; position: absolute; left: 4px; top: 0; width: 1px; height: 17px; background: #aaa; }
.kid.last::before { height: 9px; }
.kid::after { content: ""; position: absolute; left: 4px; top: 8px; width: 11px; height: 1px; background: #aaa; }
.expand { position: absolute; left: 0; top: 4px; z-index: 1; justify-content: center; width: 9px; height: 9px; border: 1px solid #888; background: #fff; font: 9px/7px "DejaVu Sans", sans-serif; }

.canvas { position: relative; flex: 1; min-width: 0; background: #2e6496; }
.drawing { position: absolute; inset: 0; width: 100%; height: 100%; }
.grid line { stroke: #8cb2cf; stroke-opacity: .65; }
.grid .major { stroke: #c4d8e4; stroke-opacity: .9; }
.grid .axis { stroke-width: 2; }
.ink { fill: none; stroke: #83f01c; stroke-width: 2; }
.glyph { fill: #d8ebf8; stroke: #2c3c4c; }
.drawing text { font: 10px "Liberation Sans", sans-serif; }
.mdi { position: absolute; top: 4px; right: 6px; display: flex; gap: 9px; }
.mdi svg { width: 10px; height: 10px; }
.viewcube { position: absolute; top: 46px; right: 28px; justify-content: center; width: 42px; height: 43px; border: 1px solid #6f9cbc; border-bottom: 2px solid #285278; background: linear-gradient(#78a5c3 40%, #7391aa); font: 600 10px "Open Sans", sans-serif; color: #43617a; }
.navbar { position: absolute; top: 113px; right: 0; display: flex; flex-direction: column; align-items: center; width: 33px; height: 181px; padding-right: 2px; background: rgb(142 182 205 / 80%); }
.navbar .caret { border-width: 2px; border-top: 3px solid #5c8398; border-bottom: 0; }
.shut { align-self: flex-end; margin: 2px 2px 5px; }
.shut svg { width: 7px; height: 7px; }
.wheel svg { width: 24px; height: 24px; }
.wheel { margin-bottom: 7px; }
.navbar hr { width: 26px; margin: 6px 0 5px; border: 0; border-top: 1px solid #5c8398; }
.navbar .ic { margin: 0 0 7px; }
.navbar .caret + button { margin-top: 6px; }
.navbar .end { align-self: flex-end; margin: 2px 3px; }

.status { display: flex; align-items: center; height: 22px; padding: 2px 2px 0; border-top: 1px solid #fff; border-bottom: 1px solid #777; background: linear-gradient(#f5f5f5, #d8d8d8 45%, #bdbdbd 50%, #c9c9c9); font: 11px/16px "Open Sans", "Noto Sans", sans-serif; color: #222; }
.msg { flex: 1; }
.num { width: 37px; padding-left: 11px; }
.meter { width: 35px; height: 14px; margin-left: 6px; background: linear-gradient(#555 40%, #1c1c1c 40%); }
.meter b { display: block; width: 10px; height: 14px; background: #078a07; }
.size { width: 12px; height: 10px; margin-left: 4px; background: repeating-linear-gradient(90deg, #bbb 0 1px, transparent 1px 4px); }
</style>
